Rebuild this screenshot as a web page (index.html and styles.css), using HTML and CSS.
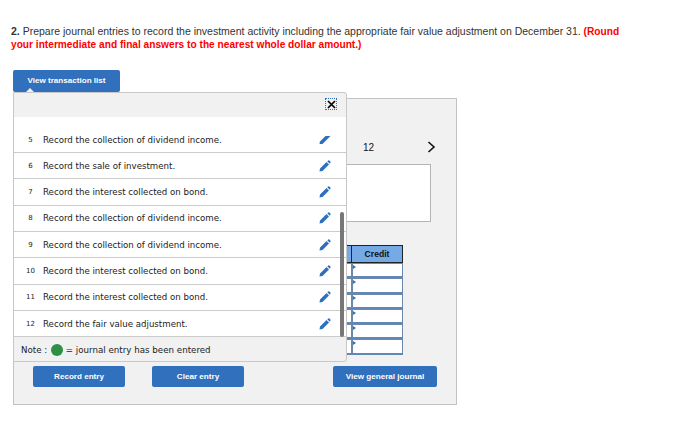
FILE: index.html
```html
<!DOCTYPE html>
<html lang="en">
  <head>
    <meta charset="UTF-8" />
    <meta name="viewport" content="width=device-width, initial-scale=1.0" />
    <title>Journal entry</title>
    <link rel="stylesheet" href="styles.css">
  </head>
  <body>
    <p class="question">
      <b>2.</b> Prepare journal entries to record the investment activity including the appropriate fair value adjustment on December 31. <b class="note-red">(Round your intermediate and final answers to the nearest whole dollar amount.)</b>
    </p>
    <button class="btn btn-list">View transaction list</button>
    <div class="panel">
      <div class="pager">
        <span class="pager-num">12</span>
        <svg class="pager-next" width="9" height="12" viewBox="0 0 9 12"><path d="M1.5 1 L7 6 L1.5 11" fill="none" stroke="#111" stroke-width="1.6"/></svg>
      </div>
      <div class="desc-box"></div>
      <div class="grid-wrap">
        <div class="grid">
          <div class="grid-head grid-debit">Debit</div>
          <div class="grid-head grid-credit">Credit</div>
          <div class="cell"></div><div class="cell"></div>
          <div class="cell"></div><div class="cell"></div>
          <div class="cell"></div><div class="cell"></div>
          <div class="cell"></div><div class="cell"></div>
          <div class="cell"></div><div class="cell"></div>
          <div class="cell"></div><div class="cell"></div>
        </div>
      </div>
      <div class="actions">
        <button class="btn btn-action">Record entry</button>
        <button class="btn btn-action">Clear entry</button>
        <button class="btn btn-journal">View general journal</button>
      </div>

      <div class="popup">
        <div class="popup-head">
          <span class="close">
            <svg width="9" height="9" viewBox="0 0 9 9"><path d="M1 1 L8 8 M8 1 L1 8" stroke="#000" stroke-width="1.7"/></svg>
          </span>
        </div>
        <div class="popup-list">
          <div class="row row-first"><span class="row-num">5</span><span class="row-text">Record the collection of dividend income.</span><svg class="pencil" width="12" height="12" viewBox="0 0 12 12"><path d="M0.5 10 L1 7.5 L6.5 2 L11.5 2 L3.5 10 Z" fill="#2f70be"/></svg></div>
          <div class="row"><span class="row-num">6</span><span class="row-text">Record the sale of investment.</span><svg class="pencil" width="12" height="12" viewBox="0 0 12 12"><path d="M0.5 11.5 L1 8.5 L7.5 2 L10 4.5 L3.5 11 Z M8.3 1.2 L9.2 0.4 Q9.8 0 10.4 0.5 L11.4 1.6 Q11.9 2.2 11.4 2.8 L10.7 3.7 Z" fill="#2f70be"/></svg></div>
          <div class="row"><span class="row-num">7</span><span class="row-text">Record the interest collected on bond.</span><svg class="pencil" width="12" height="12" viewBox="0 0 12 12"><path d="M0.5 11.5 L1 8.5 L7.5 2 L10 4.5 L3.5 11 Z M8.3 1.2 L9.2 0.4 Q9.8 0 10.4 0.5 L11.4 1.6 Q11.9 2.2 11.4 2.8 L10.7 3.7 Z" fill="#2f70be"/></svg></div>
          <div class="row"><span class="row-num">8</span><span class="row-text">Record the collection of dividend income.</span><svg class="pencil" width="12" height="12" viewBox="0 0 12 12"><path d="M0.5 11.5 L1 8.5 L7.5 2 L10 4.5 L3.5 11 Z M8.3 1.2 L9.2 0.4 Q9.8 0 10.4 0.5 L11.4 1.6 Q11.9 2.2 11.4 2.8 L10.7 3.7 Z" fill="#2f70be"/></svg></div>
          <div class="row"><span class="row-num">9</span><span class="row-text">Record the collection of dividend income.</span><svg class="pencil" width="12" height="12" viewBox="0 0 12 12"><path d="M0.5 11.5 L1 8.5 L7.5 2 L10 4.5 L3.5 11 Z M8.3 1.2 L9.2 0.4 Q9.8 0 10.4 0.5 L11.4 1.6 Q11.9 2.2 11.4 2.8 L10.7 3.7 Z" fill="#2f70be"/></svg></div>
          <div class="row"><span class="row-num">10</span><span class="row-text">Record the interest collected on bond.</span><svg class="pencil" width="12" height="12" viewBox="0 0 12 12"><path d="M0.5 11.5 L1 8.5 L7.5 2 L10 4.5 L3.5 11 Z M8.3 1.2 L9.2 0.4 Q9.8 0 10.4 0.5 L11.4 1.6 Q11.9 2.2 11.4 2.8 L10.7 3.7 Z" fill="#2f70be"/></svg></div>
          <div class="row"><span class="row-num">11</span><span class="row-text">Record the interest collected on bond.</span><svg class="pencil" width="12" height="12" viewBox="0 0 12 12"><path d="M0.5 11.5 L1 8.5 L7.5 2 L10 4.5 L3.5 11 Z M8.3 1.2 L9.2 0.4 Q9.8 0 10.4 0.5 L11.4 1.6 Q11.9 2.2 11.4 2.8 L10.7 3.7 Z" fill="#2f70be"/></svg></div>
          <div class="row"><span class="row-num">12</span><span class="row-text">Record the fair value adjustment.</span><svg class="pencil" width="12" height="12" viewBox="0 0 12 12"><path d="M0.5 11.5 L1 8.5 L7.5 2 L10 4.5 L3.5 11 Z M8.3 1.2 L9.2 0.4 Q9.8 0 10.4 0.5 L11.4 1.6 Q11.9 2.2 11.4 2.8 L10.7 3.7 Z" fill="#2f70be"/></svg></div>
          <div class="scrollbar"></div>
        </div>
        <div class="popup-note">Note : <span class="dot"></span> = journal entry has been entered</div>
      </div>
    </div>
  </body>
</html>
```
FILE: styles.css
```css
body {
  margin: 0;
  background-color: #fff;
  font-family: "Liberation Sans", Arial, sans-serif;
  color: #333;
}
.question {
  margin: 0;
  padding: 25px 60px 0 11px;
  font-size: 10.5px;
  line-height: 12.5px;
}
.note-red {
  color: #f00;
  font-size: 10.16px;
  line-height: 1;
}
.btn {
  display: block;
  border: 0;
  border-radius: 2px;
  padding: 0;
  height: 21px;
  background-color: #3170bd;
  color: #fff;
  font-family: "Liberation Sans", Arial, sans-serif;
  font-size: 8.1px;
  font-weight: bold;
}
.btn-list {
  position: relative;
  width: 107px;
  height: 22px;
  margin: 20px 0 0 13px;
  padding-bottom: 2px;
}
.btn-list::after {
  content: "";
  position: absolute;
  left: 13px;
  bottom: 0;
  border: 4px solid transparent;
  border-top: 0;
  border-bottom-color: #f1f1f1;
}
.panel {
  position: relative;
  width: 442px;
  height: 305px;
  margin: 6px 0 0 13px;
  border: 1px solid #c3c3c3;
  background-color: #f1f1f1;
  display: flex;
  flex-direction: column;
  align-items: flex-end;
}
.pager {
  display: flex;
  align-items: center;
  margin-top: 41px;
  margin-right: 20px;
  height: 14px;
}
.pager-num {
  margin-right: 53px;
  font-size: 10px;
  color: #111;
}
.pager-next {
  margin-top: -1px;
}
.desc-box {
  width: 200px;
  height: 56px;
  margin-top: 10px;
  margin-right: 25px;
  border: 1px solid #b5b5b5;
  background-color: #fff;
}
.grid-wrap {
  margin-top: 23px;
  margin-right: 53px;
}
.grid {
  display: grid;
  grid-template-columns: 100px 51px;
  width: 151px;
  background-color: #777;
}
.grid-head {
  height: 16px;
  border: 1px solid #222;
  background-color: #76aae6;
  color: #111;
  font-size: 8.6px;
  font-weight: bold;
  line-height: 16px;
  text-align: center;
}
.grid-credit {
  border-left: 0;
}
.cell {
  position: relative;
  height: 12.3px;
  border: 1px solid #6d88aa;
  border-bottom: 2px solid #5f87b8;
  background-color: #fff;
}
.cell::before {
  content: "";
  position: absolute;
  left: 0;
  top: 1px;
  border: 2px solid transparent;
  border-left: 3px solid #3170bd;
}
.actions {
  display: flex;
  align-self: stretch;
  margin-top: 11px;
  padding: 0 19px;
}
.btn-action {
  width: 92px;
  margin-right: 27px;
}
.btn-journal {
  width: 104px;
  margin-left: auto;
}
.popup {
  position: absolute;
  left: -1px;
  top: -7px;
  width: 332px;
  height: 268px;
  border: 1px solid #c8c8c8;
  border-radius: 0 3px 3px 0;
  background-color: #f1f1f1;
  font-family: "DejaVu Sans", Verdana, sans-serif;
  color: #222;
}
.popup-head {
  display: flex;
  justify-content: flex-end;
  align-items: center;
  height: 22px;
  padding: 0 9px 2px 0;
}
.close {
  display: flex;
  justify-content: center;
  align-items: center;
  width: 10px;
  height: 10px;
  border: 1px dotted #2f70be;
}
.popup-list {
  position: relative;
  background-color: #fff;
}
.row {
  display: flex;
  align-items: center;
  height: 25.35px;
  border-bottom: 1px solid #cbcbcb;
}
.row-first {
  height: 36px;
  padding-top: 10px;
  box-sizing: border-box;
}
.row-num {
  width: 29px;
  padding-left: 4px;
  box-sizing: border-box;
  text-align: center;
  font-size: 7px;
}
.row-text {
  flex: 1;
  font-size: 8.65px;
}
.pencil {
  margin-right: 15px;
}
.scrollbar {
  position: absolute;
  right: 2px;
  bottom: 0;
  width: 4px;
  height: 125px;
  border-radius: 2px;
  background-color: #777;
}
.popup-note {
  display: flex;
  align-items: center;
  height: 23px;
  padding: 1px 0 0 7px;
  font-size: 8.7px;
  white-space: pre;
}
.dot {
  width: 12px;
  height: 12px;
  margin-left: 1px;
  border-radius: 50%;
  background-color: #2f8f44;
}
```
